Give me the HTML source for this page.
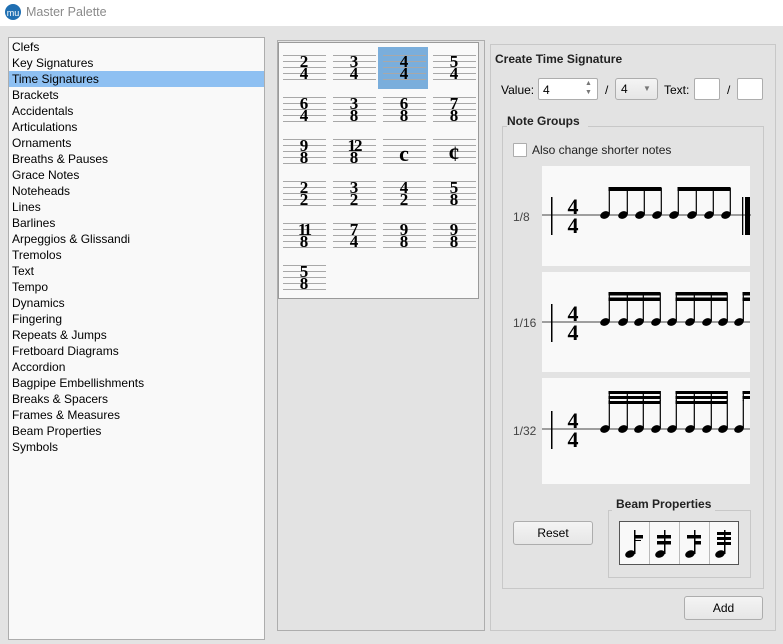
<!DOCTYPE html>
<html><head><meta charset="utf-8"><style>
*{margin:0;padding:0;box-sizing:border-box}
body{width:783px;height:644px;background:#e3e3e3;font-family:"Liberation Sans",sans-serif;font-size:12px;color:#000;position:relative;overflow:hidden}
.abs{position:absolute}
#title{left:0;top:0;width:783px;height:26px;background:#fff}
#title span{position:absolute;left:26px;top:5px;font-size:12.5px;color:#8a8a8a}
#list{left:8px;top:37px;width:257px;height:603px;background:#f9f9f9;border:1px solid #adadad}
#list div{height:16px;line-height:16px;padding-left:3px;font-size:12px;white-space:nowrap}
#list div.sel{background:#8ec0f2}
#mid{left:277px;top:40px;width:208px;height:591px;border:1px solid #adadad;background:#e3e3e3}
#grid{left:278px;top:42px;width:201px;height:257px;background:#f9f9f9;border:1px solid #9a9a9a}
#right{left:490px;top:44px;width:286px;height:587px;border:1px solid #c8c8c8}
.lbl{font-size:12px}
.bold{font-weight:bold;font-size:12px;color:#222}
.inp{background:#fff;border:1px solid #adadad;border-radius:2px}
.btn{background:linear-gradient(#f4f4f4,#e6e6e6);border:1px solid #adadad;border-radius:3px;text-align:center;line-height:22px;font-size:12px}
.score{background:#f9f9f9}
</style></head><body>
<div id="title" class="abs">
<svg class="abs" style="left:5px;top:4px" width="16" height="16"><circle cx="8" cy="8" r="8" fill="#1f6fb2"/><text x="8" y="12" font-size="9" fill="#fff" text-anchor="middle" font-family="Liberation Sans">mu</text></svg>
<span>Master Palette</span></div>

<div id="list" class="abs"><div style="height:1px"></div>
<div>Clefs</div><div>Key Signatures</div><div class="sel">Time Signatures</div><div>Brackets</div><div>Accidentals</div><div>Articulations</div><div>Ornaments</div><div>Breaths &amp; Pauses</div><div>Grace Notes</div><div>Noteheads</div><div>Lines</div><div>Barlines</div><div>Arpeggios &amp; Glissandi</div><div>Tremolos</div><div>Text</div><div>Tempo</div><div>Dynamics</div><div>Fingering</div><div>Repeats &amp; Jumps</div><div>Fretboard Diagrams</div><div>Accordion</div><div>Bagpipe Embellishments</div><div>Breaks &amp; Spacers</div><div>Frames &amp; Measures</div><div>Beam Properties</div><div>Symbols</div>
</div>

<div id="mid" class="abs"></div>
<div id="grid" class="abs"></div>

<svg class="abs" style="left:278px;top:42px" width="201" height="257" font-family="Liberation Serif" font-weight="bold" font-size="17" text-anchor="middle">
<rect x="100" y="5" width="50" height="42" fill="#7aaedc"/>
<defs><g id="stf" stroke="#a8a8a8" stroke-width="1"><line x1="5" x2="48" y1="13.5" y2="13.5"/><line x1="5" x2="48" y1="19.5" y2="19.5"/><line x1="5" x2="48" y1="25.5" y2="25.5"/><line x1="5" x2="48" y1="31.5" y2="31.5"/><line x1="5" x2="48" y1="37.5" y2="37.5"/></g></defs>
<use href="#stf" x="0" y="0"/><use href="#stf" x="50" y="0"/><use href="#stf" x="100" y="0"/><use href="#stf" x="150" y="0"/>
<use href="#stf" x="0" y="42"/><use href="#stf" x="50" y="42"/><use href="#stf" x="100" y="42"/><use href="#stf" x="150" y="42"/>
<use href="#stf" x="0" y="84"/><use href="#stf" x="50" y="84"/><use href="#stf" x="100" y="84"/><use href="#stf" x="150" y="84"/>
<use href="#stf" x="0" y="126"/><use href="#stf" x="50" y="126"/><use href="#stf" x="100" y="126"/><use href="#stf" x="150" y="126"/>
<use href="#stf" x="0" y="168"/><use href="#stf" x="50" y="168"/><use href="#stf" x="100" y="168"/><use href="#stf" x="150" y="168"/>
<use href="#stf" x="0" y="210"/>
<g>
<text x="26" y="25">2</text><text x="26" y="37">4</text>
<text x="76" y="25">3</text><text x="76" y="37">4</text>
<text x="126" y="25">4</text><text x="126" y="37">4</text>
<text x="176" y="25">5</text><text x="176" y="37">4</text>
<text x="26" y="67">6</text><text x="26" y="79">4</text>
<text x="76" y="67">3</text><text x="76" y="79">8</text>
<text x="126" y="67">6</text><text x="126" y="79">8</text>
<text x="176" y="67">7</text><text x="176" y="79">8</text>
<text x="26" y="109">9</text><text x="26" y="121">8</text>
<text x="76" y="109" letter-spacing="-2">12</text><text x="76" y="121">8</text>
<text x="126" y="119" font-size="22">c</text>
<text x="176" y="119" font-size="22">¢</text>
<text x="26" y="151">2</text><text x="26" y="163">2</text>
<text x="76" y="151">3</text><text x="76" y="163">2</text>
<text x="126" y="151">4</text><text x="126" y="163">2</text>
<text x="176" y="151">5</text><text x="176" y="163">8</text>
<text x="26" y="193" letter-spacing="-2">11</text><text x="26" y="205">8</text>
<text x="76" y="193">7</text><text x="76" y="205">4</text>
<text x="126" y="193">9</text><text x="126" y="205">8</text>
<text x="176" y="193">9</text><text x="176" y="205">8</text>
<text x="26" y="235">5</text><text x="26" y="247">8</text>
</g></svg>

<div id="right" class="abs"></div>
<div class="abs bold" style="left:495px;top:52px;background:#e3e3e3;padding-right:4px">Create Time Signature</div>
<div class="abs lbl" style="left:501px;top:83px">Value:</div>
<div class="abs inp" style="left:538px;top:78px;width:60px;height:22px"><span style="position:absolute;left:4px;top:4px">4</span>
<span style="position:absolute;left:46px;top:1px;font-size:7px;color:#777">▲</span><span style="position:absolute;left:46px;top:10px;font-size:7px;color:#777">▼</span></div>
<div class="abs lbl" style="left:605px;top:83px">/</div>
<div class="abs btn" style="left:615px;top:78px;width:43px;height:22px;text-align:left;padding-left:5px;line-height:20px">4<span style="position:absolute;left:27px;top:0;font-size:8px;color:#777">▼</span></div>
<div class="abs lbl" style="left:664px;top:83px">Text:</div>
<div class="abs inp" style="left:694px;top:78px;width:26px;height:22px"></div>
<div class="abs lbl" style="left:727px;top:83px">/</div>
<div class="abs inp" style="left:737px;top:78px;width:26px;height:22px"></div>

<div class="abs" style="left:502px;top:126px;width:262px;height:463px;border:1px solid #c8c8c8"></div>
<div class="abs bold" style="left:507px;top:114px;background:#e3e3e3;padding:0 8px 0 0">Note Groups</div>
<div class="abs inp" style="left:513px;top:143px;width:14px;height:14px;border-radius:1px"></div>
<div class="abs lbl" style="left:532px;top:143px;color:#222">Also change shorter notes</div>

<div class="abs lbl" style="left:513px;top:210px;color:#444">1/8</div>
<div class="abs lbl" style="left:513px;top:316px;color:#444">1/16</div>
<div class="abs lbl" style="left:513px;top:424px;color:#444">1/32</div>

<div class="abs score" style="left:542px;top:166px;width:208px;height:100px"></div>
<div class="abs score" style="left:542px;top:272px;width:208px;height:100px"></div>
<div class="abs score" style="left:542px;top:378px;width:208px;height:106px"></div>

<svg class="abs" style="left:542px;top:166px" width="209" height="100">
<defs>
<g id="n"><ellipse cx="0" cy="0" rx="5" ry="3.6" transform="rotate(-22)" fill="#000"/><line x1="4.3" y1="-1" x2="4.3" y2="-27" stroke="#000" stroke-width="1.2"/></g>
<g id="n2"><ellipse cx="0" cy="0" rx="5" ry="3.6" transform="rotate(-22)" fill="#000"/><line x1="4.3" y1="-1" x2="4.3" y2="-29" stroke="#000" stroke-width="1.2"/></g>
</defs>
<g transform="translate(0,49)">
<rect x="0" y="-0.5" width="209" height="1" fill="#444"/>
<rect x="9" y="-18" width="1.5" height="38" fill="#000"/>
<g font-family="Liberation Serif" font-weight="bold" font-size="22" text-anchor="middle"><text x="31" y="-1">4</text><text x="31" y="18">4</text></g>
<use href="#n" x="63"/><use href="#n" x="81"/><use href="#n" x="98"/><use href="#n" x="115"/>
<use href="#n" x="132"/><use href="#n" x="150"/><use href="#n" x="167"/><use href="#n" x="184"/>
<rect x="66.5" y="-28" width="53" height="4" fill="#000"/>
<rect x="135.5" y="-28" width="53" height="4" fill="#000"/>
<rect x="200" y="-18" width="1.3" height="38" fill="#000"/>
<rect x="203" y="-18" width="5" height="38" fill="#000"/>
</g>
</svg>
<svg class="abs" style="left:542px;top:272px" width="208" height="100">
<g transform="translate(0,50)">
<rect x="0" y="-0.5" width="208" height="1" fill="#444"/>
<rect x="9" y="-18" width="1.5" height="38" fill="#000"/>
<g font-family="Liberation Serif" font-weight="bold" font-size="22" text-anchor="middle"><text x="31" y="-1">4</text><text x="31" y="18">4</text></g>
<use href="#n2" x="63"/><use href="#n2" x="81"/><use href="#n2" x="97"/><use href="#n2" x="114"/>
<use href="#n2" x="130"/><use href="#n2" x="148"/><use href="#n2" x="165"/><use href="#n2" x="181"/><use href="#n2" x="197"/>
<rect x="66.5" y="-30" width="52" height="3.5" fill="#000"/><rect x="66.5" y="-24.5" width="52" height="3.5" fill="#000"/>
<rect x="133.5" y="-30" width="52" height="3.5" fill="#000"/><rect x="133.5" y="-24.5" width="52" height="3.5" fill="#000"/>
<rect x="200.5" y="-30" width="8" height="3.5" fill="#000"/><rect x="200.5" y="-24.5" width="8" height="3.5" fill="#000"/>
</g></svg>
<svg class="abs" style="left:542px;top:378px" width="208" height="106">
<g transform="translate(0,51)">
<rect x="0" y="-0.5" width="208" height="1" fill="#444"/>
<rect x="9" y="-18" width="1.5" height="38" fill="#000"/>
<g font-family="Liberation Serif" font-weight="bold" font-size="22" text-anchor="middle"><text x="31" y="-1">4</text><text x="31" y="18">4</text></g>
<use href="#n2" x="63"/><use href="#n2" x="81"/><use href="#n2" x="97"/><use href="#n2" x="114"/>
<use href="#n2" x="130"/><use href="#n2" x="148"/><use href="#n2" x="165"/><use href="#n2" x="181"/><use href="#n2" x="197"/>
<g stroke="#000" stroke-width="1.2"><line x1="67.3" y1="-28" x2="67.3" y2="-38"/><line x1="85.3" y1="-28" x2="85.3" y2="-38"/><line x1="101.3" y1="-28" x2="101.3" y2="-38"/><line x1="118.3" y1="-28" x2="118.3" y2="-38"/><line x1="134.3" y1="-28" x2="134.3" y2="-38"/><line x1="152.3" y1="-28" x2="152.3" y2="-38"/><line x1="169.3" y1="-28" x2="169.3" y2="-38"/><line x1="185.3" y1="-28" x2="185.3" y2="-38"/><line x1="201.3" y1="-28" x2="201.3" y2="-38"/></g>
<rect x="66.5" y="-38" width="52" height="3" fill="#000"/><rect x="66.5" y="-33" width="52" height="3" fill="#000"/><rect x="66.5" y="-28" width="52" height="3" fill="#000"/>
<rect x="133.5" y="-38" width="52" height="3" fill="#000"/><rect x="133.5" y="-33" width="52" height="3" fill="#000"/><rect x="133.5" y="-28" width="52" height="3" fill="#000"/>
<rect x="200.5" y="-38" width="8" height="3" fill="#000"/><rect x="200.5" y="-33" width="8" height="3" fill="#000"/>
</g></svg>

<div class="abs btn" style="left:513px;top:521px;width:80px;height:24px">Reset</div>
<div class="abs" style="left:608px;top:510px;width:143px;height:68px;border:1px solid #c8c8c8"></div>
<div class="abs bold" style="left:612px;top:497px;background:#e3e3e3;padding:0 4px">Beam Properties</div>
<div class="abs" style="left:619px;top:521px;width:120px;height:44px;background:#f9f9f9;border:1px solid #555"></div>
<svg class="abs" style="left:619px;top:521px" width="120" height="44">
<g stroke="#bbb"><line x1="30.5" y1="1" x2="30.5" y2="43"/><line x1="60.5" y1="1" x2="60.5" y2="43"/><line x1="90.5" y1="1" x2="90.5" y2="43"/></g>
<g fill="#000">
<ellipse cx="11" cy="33" rx="5" ry="3.5" transform="rotate(-22 11 33)"/><rect x="15" y="9" width="1.5" height="24"/><rect x="16" y="14" width="8" height="3.5"/><rect x="16" y="19" width="6" height="1"/>
<ellipse cx="41" cy="33" rx="5" ry="3.5" transform="rotate(-22 41 33)"/><rect x="45" y="9" width="1.5" height="24"/><rect x="38" y="14" width="14" height="3.5"/><rect x="38" y="20" width="14" height="3.5"/>
<ellipse cx="71" cy="33" rx="5" ry="3.5" transform="rotate(-22 71 33)"/><rect x="75" y="9" width="1.5" height="24"/><rect x="68" y="14" width="14" height="3.5"/><rect x="76" y="20" width="6" height="3.5"/>
<ellipse cx="101" cy="33" rx="5" ry="3.5" transform="rotate(-22 101 33)"/><rect x="105" y="9" width="1.5" height="24"/><rect x="98" y="11" width="14" height="3"/><rect x="98" y="16" width="14" height="3"/><rect x="98" y="21" width="14" height="3"/>
</g></svg>
<div class="abs btn" style="left:684px;top:596px;width:79px;height:24px">Add</div>
</body></html>
